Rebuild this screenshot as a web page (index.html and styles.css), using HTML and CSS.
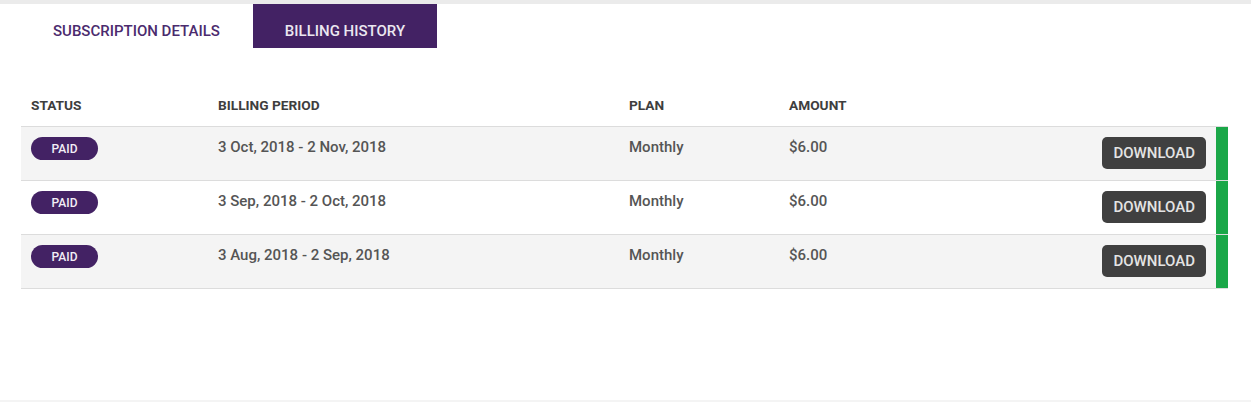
FILE: index.html
```html
<!DOCTYPE html>
<html lang="en">
<head>
<meta charset="utf-8">
<title>Billing History</title>
<link rel="stylesheet" href="styles.css">
</head>
<body>
<div class="page">
  <div class="topbar"></div>
  <nav class="tabs">
    <a class="tab">SUBSCRIPTION DETAILS</a>
    <a class="tab tab-active">BILLING HISTORY</a>
  </nav>
  <div class="table">
    <div class="row head">
      <div class="cell">STATUS</div>
      <div class="cell">BILLING PERIOD</div>
      <div class="cell">PLAN</div>
      <div class="cell">AMOUNT</div>
      <div class="cell"></div>
      <div class="edge-empty"></div>
    </div>
    <div class="row item shaded">
      <div class="cell"><span class="pill">PAID</span></div>
      <div class="cell text">3 Oct, 2018 - 2 Nov, 2018</div>
      <div class="cell text">Monthly</div>
      <div class="cell text">$6.00</div>
      <div class="cell act"><button class="btn">DOWNLOAD</button></div>
      <div class="edge"></div>
    </div>
    <div class="row item">
      <div class="cell"><span class="pill">PAID</span></div>
      <div class="cell text">3 Sep, 2018 - 2 Oct, 2018</div>
      <div class="cell text">Monthly</div>
      <div class="cell text">$6.00</div>
      <div class="cell act"><button class="btn">DOWNLOAD</button></div>
      <div class="edge"></div>
    </div>
    <div class="row item shaded last">
      <div class="cell"><span class="pill">PAID</span></div>
      <div class="cell text">3 Aug, 2018 - 2 Sep, 2018</div>
      <div class="cell text">Monthly</div>
      <div class="cell text">$6.00</div>
      <div class="cell act"><button class="btn">DOWNLOAD</button></div>
      <div class="edge"></div>
    </div>
  </div>
</div>
</body>
</html>
```

FILE: styles.css
```css
html, body {
  margin: 0;
  padding: 0;
  background: #ffffff;
}
body {
  font-family: Roboto, "Liberation Sans", Arial, sans-serif;
}
.page {
  height: 400px;
  border-bottom: 2px solid #f4f4f4;
  box-sizing: content-box;
}
.topbar {
  height: 4px;
  background: #ebebeb;
}
.tabs {
  display: flex;
  padding-left: 21px;
  gap: 1px;
}
.tab {
  display: block;
  padding: 19px 32px 9px;
  line-height: 16px;
  font-size: 15px;
  font-weight: 500;
  color: #4b2b6e;
  white-space: nowrap;
}
.tab-active {
  background: #432264;
  color: #ebe7f0;
}
.table {
  margin: 49px 23px 0 21px;
}
.row {
  display: grid;
  grid-template-columns: 187px 411px 160px 1fr auto 12px;
}
.head .cell {
  font-size: 13.7px;
  font-weight: 700;
  line-height: 16px;
  color: #3e3e3e;
  padding: 0 10px 13px;
}
.item {
  border-top: 1px solid #dcdcdc;
  background: #ffffff;
}
.item.shaded {
  background: #f4f4f4;
}
.item.last {
  border-bottom: 1px solid #dcdcdc;
}
.item .cell {
  padding: 10px 10px 11px;
}
.cell.text {
  font-size: 15px;
  font-weight: 500;
  color: #555555;
  line-height: 20px;
}
.pill {
  display: inline-flex;
  align-items: center;
  justify-content: center;
  width: 67px;
  height: 23px;
  border-radius: 12px;
  background: #432264;
  color: #f2eef6;
  font-size: 12px;
  font-weight: 500;
}
.act {
  display: flex;
  justify-content: flex-end;
}
.btn {
  height: 32px;
  padding: 0 11px;
  border: none;
  border-radius: 5px;
  background: #404040;
  color: #e4e4e4;
  font-family: Roboto, "Liberation Sans", Arial, sans-serif;
  font-size: 15px;
  font-weight: 500;
}
.edge {
  background: #1aa748;
}
```
